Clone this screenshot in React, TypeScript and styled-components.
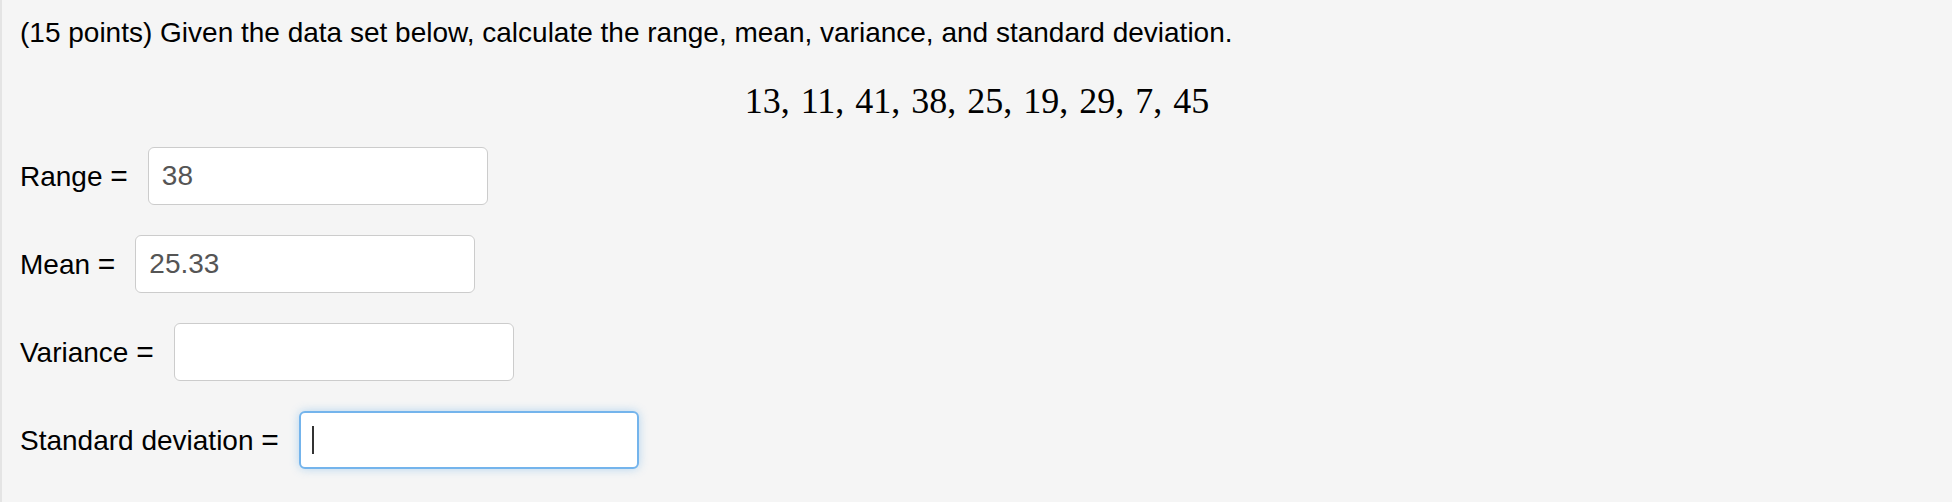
import styled, { createGlobalStyle, css } from 'styled-components';

const GlobalStyle = createGlobalStyle`
  html, body {
    margin: 0;
    padding: 0;
    background: #f5f5f5;
  }
  body {
    font-family: "Liberation Sans", Arial, sans-serif;
    color: #000;
  }
`;

interface Answer {
  label: string;
  value: string;
  focused?: boolean;
}

const answers: Answer[] = [
  { label: 'Range', value: '38' },
  { label: 'Mean', value: '25.33' },
  { label: 'Variance', value: '' },
  { label: 'Standard deviation', value: '', focused: true },
];

const data = [13, 11, 41, 38, 25, 19, 29, 7, 45];

export default function App() {
  return (
    <>
      <GlobalStyle />
      <Question>
        <Prompt>
          (15 points) Given the data set below, calculate the range, mean, variance, and standard deviation.
        </Prompt>
        <DataSet>{data.join(', ')}</DataSet>
        <Answers>
          {answers.map((a) => (
            <AnswerRow key={a.label}>
              <Label>
                {a.label} <Equals>=</Equals>
              </Label>
              <InputWrap>
                <Field $focused={a.focused} value={a.value} readOnly />
                {a.focused && <Caret />}
              </InputWrap>
            </AnswerRow>
          ))}
        </Answers>
      </Question>
    </>
  );
}

const Question = styled.div`
  min-height: 502px;
  box-sizing: border-box;
  border-left: 2px solid #e4e4e4;
  padding: 17px 18px 0;
`;

const Prompt = styled.p`
  margin: 0;
  font-size: 28px;
  line-height: 32px;
`;

const DataSet = styled.div`
  margin-top: 32px;
  text-align: center;
  font-family: "Liberation Serif", "Times New Roman", serif;
  font-size: 36px;
  line-height: 40px;
  word-spacing: 2px;
`;

const Answers = styled.div`
  margin-top: 26px;
  display: flex;
  flex-direction: column;
  gap: 30px;
`;

const AnswerRow = styled.div`
  display: flex;
  align-items: center;
  gap: 20px;
`;

const Label = styled.span`
  font-size: 28px;
  line-height: 32px;
  white-space: nowrap;
`;

const Equals = styled.span`
  font-size: 30px;
`;

const InputWrap = styled.div`
  position: relative;
`;

const Field = styled.input<{ $focused?: boolean }>`
  display: block;
  box-sizing: border-box;
  width: 340px;
  height: 58px;
  padding: 0 13px;
  border: 1px solid #cccccc;
  border-radius: 6px;
  background: #fff;
  font-family: "Liberation Sans", Arial, sans-serif;
  font-size: 28px;
  color: #555;
  outline: none;

  ${({ $focused }) =>
    $focused &&
    css`
      border: 2px solid #74b4ec;
      padding: 0 12px;
      box-shadow: 0 0 10px rgba(102, 175, 233, 0.45);
    `}
`;

const Caret = styled.span`
  position: absolute;
  left: 13px;
  top: 15px;
  width: 2px;
  height: 28px;
  background: #333;
`;
